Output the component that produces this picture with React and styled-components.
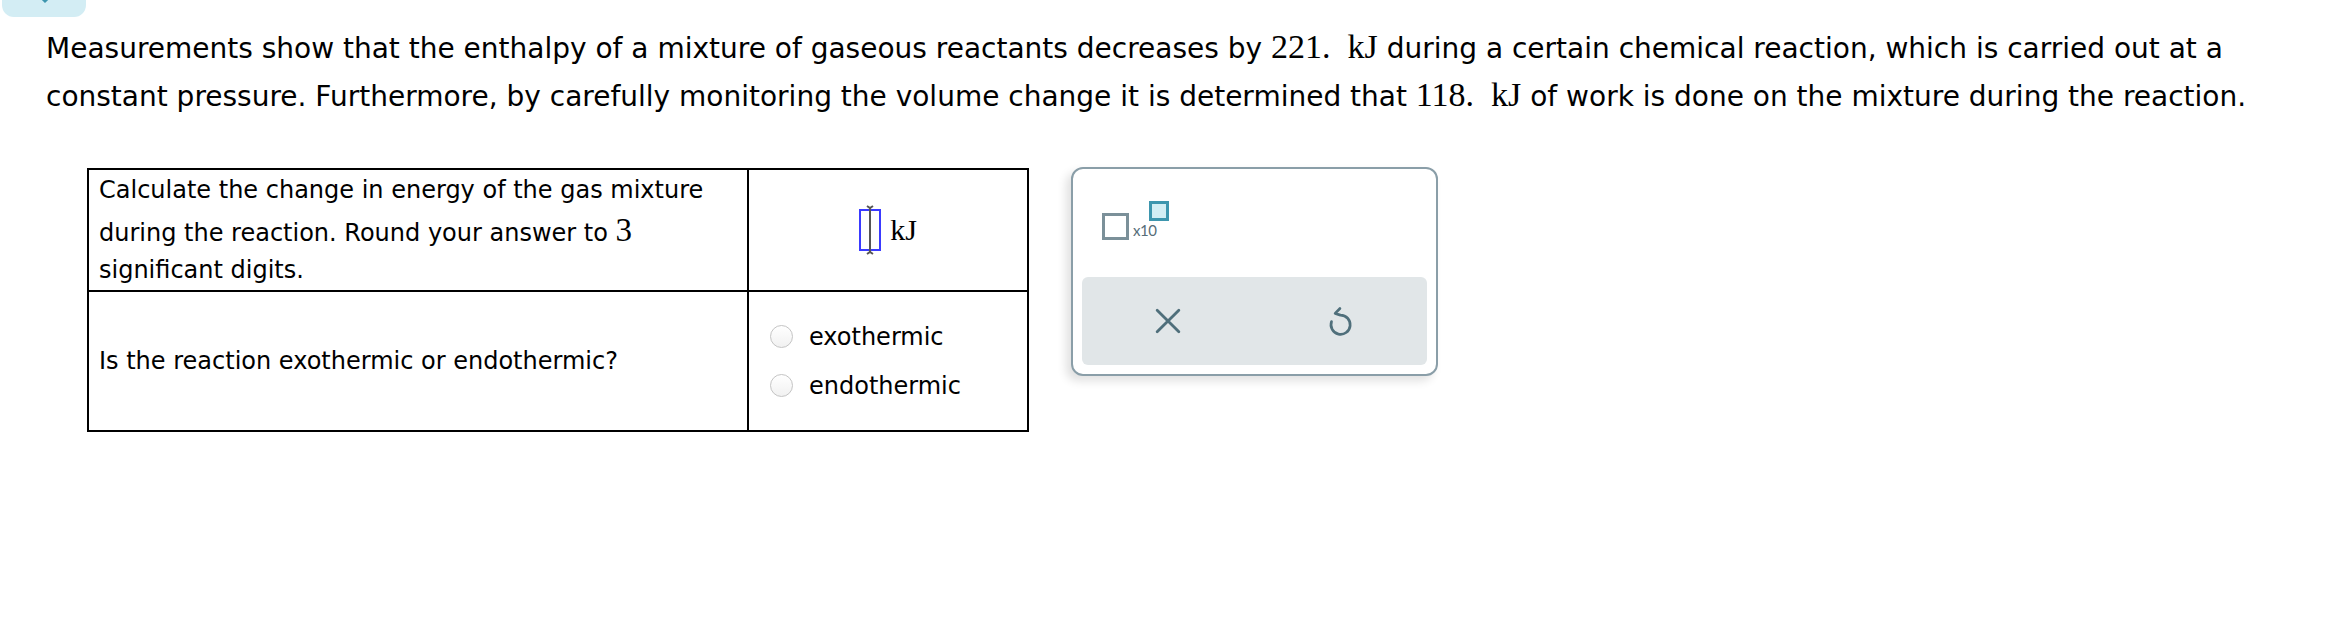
import React from 'react'
import styled, { createGlobalStyle } from 'styled-components'

const GlobalStyle = createGlobalStyle`
  body {
    margin: 0;
    background: #fff;
    font-family: 'DejaVu Sans', Verdana, sans-serif;
    color: #000;
  }
`

const Page = styled.div`
  width: 2344px;
  height: 628px;
  overflow: hidden;
`

const TopTab = styled.div`
  position: relative;
  width: 84px;
  height: 17px;
  margin-left: 2px;
  background: #d3edf4;
  border-radius: 0 0 12px 12px;

  svg {
    position: absolute;
    left: 35px;
    top: -6px;
  }
`

const Content = styled.div`
  padding-left: 46px;
`

const Prompt = styled.p`
  margin: 8px 0 0;
  max-width: 2250px;
  font-size: 28px;
  line-height: 48px;
`

const Serif = styled.span`
  font-family: 'Liberation Serif', 'Times New Roman', serif;
  font-size: ${(p) => p.$size || 34}px;
  line-height: ${(p) => p.$lh || '1'};
`

const UnitGap = styled.span`
  margin-left: 0.5em;
`

const Workspace = styled.div`
  display: flex;
  align-items: flex-start;
  gap: 42px;
  margin: 47px 0 0 41px;
`

const QuestionGrid = styled.div`
  display: grid;
  grid-template-columns: 660px 280px;
  border-top: 2px solid #000;
  border-left: 2px solid #000;
`

const Cell = styled.div`
  box-sizing: border-box;
  height: ${(p) => p.$h}px;
  border-right: 2px solid #000;
  border-bottom: 2px solid #000;
  display: flex;
  align-items: center;
  justify-content: ${(p) => (p.$center ? 'center' : 'flex-start')};
  padding: ${(p) => (p.$center ? '0' : '0 10px')};
  font-size: 24px;
  line-height: 36px;
`

const AnswerSlot = styled.span`
  position: relative;
  display: inline-block;
  box-sizing: border-box;
  width: 22px;
  height: 42px;
  border: 2px solid #3a3aff;

  svg {
    position: absolute;
    left: 4px;
    top: -6px;
  }
`

const Unit = styled.span`
  font-family: 'Liberation Serif', 'Times New Roman', serif;
  font-size: 30px;
  margin-left: 9px;
`

const Choices = styled.div`
  display: flex;
  flex-direction: column;
  gap: 13px;
  padding-left: 11px;
  width: 100%;
`

const Choice = styled.label`
  display: flex;
  align-items: center;
  gap: 16px;
  font-size: 24px;
  line-height: 36px;
`

const Radio = styled.span`
  box-sizing: border-box;
  width: 23px;
  height: 23px;
  border-radius: 50%;
  border: 1px solid #c4c4c4;
  background: linear-gradient(#fff, #f1f1f1);
`

const Keypad = styled.div`
  box-sizing: border-box;
  width: 367px;
  height: 209px;
  margin-top: -1px;
  padding: 9px;
  border: 2px solid #8a9ea8;
  border-radius: 12px;
  background: #fff;
  box-shadow: -5px 5px 10px rgba(0, 0, 0, 0.12);
  display: flex;
  flex-direction: column;
`

const KeyRow = styled.div`
  height: 99px;
  box-sizing: border-box;
  padding: 23px 0 0 20px;
`

const ExpButton = styled.div`
  display: inline-flex;
  align-items: flex-start;
`

const BaseBox = styled.span`
  box-sizing: border-box;
  width: 27px;
  height: 27px;
  margin-top: 12px;
  border: 3px solid #7b9099;
`

const ExpLabel = styled.span`
  align-self: flex-end;
  margin: 0 0 2px 4px;
  font-family: Lato, 'Open Sans', sans-serif;
  font-size: 15px;
  line-height: 1;
  letter-spacing: -0.5px;
  color: #566d78;
`

const SupBox = styled.span`
  box-sizing: border-box;
  width: 20px;
  height: 20px;
  margin-left: -7px;
  border: 3px solid #3d96ae;
  background: #d3eef4;
`

const Actions = styled.div`
  height: 88px;
  display: grid;
  grid-template-columns: 1fr 1fr;
  background: #e1e6e8;
  border-radius: 6px;
`

const ActionButton = styled.div`
  display: flex;
  align-items: center;
  justify-content: center;
  color: #4f6f7b;
`

const Quantity = ({ value, unit }) => (
  <Serif>
    {value}
    <UnitGap>{unit}</UnitGap>
  </Serif>
)

export default function App() {
  return (
    <Page>
      <GlobalStyle />
      <TopTab>
        <svg width='16' height='10' viewBox='0 0 16 10'>
          <path d='M3 2 L8 7 L13 2' fill='none' stroke='#3d96ae' strokeWidth='3' strokeLinecap='round' />
        </svg>
      </TopTab>
      <Content>
        <Prompt>
          Measurements show that the enthalpy of a mixture of gaseous reactants decreases by{' '}
          <Quantity value='221.' unit='kJ' /> during a certain chemical reaction, which is carried
          out at a constant pressure. Furthermore, by carefully monitoring the volume change it is
          determined that <Quantity value='118.' unit='kJ' /> of work is done on the mixture during
          the reaction.
        </Prompt>
        <Workspace>
          <QuestionGrid>
            <Cell $h={122}>
              <div>
                Calculate the change in energy of the gas mixture during the reaction. Round your
                answer to <Serif $size={33} $lh='44px'>3</Serif> significant digits.
              </div>
            </Cell>
            <Cell $h={122} $center>
              <AnswerSlot>
                <svg width='10' height='50' viewBox='0 0 10 50'>
                  <path d='M5 2 V48 M2 1 L5 3 L8 1 M2 49 L5 47 L8 49' fill='none' stroke='#555' strokeWidth='2' />
                </svg>
              </AnswerSlot>
              <Unit>kJ</Unit>
            </Cell>
            <Cell $h={140}>Is the reaction exothermic or endothermic?</Cell>
            <Cell $h={140}>
              <Choices>
                <Choice>
                  <Radio />
                  exothermic
                </Choice>
                <Choice>
                  <Radio />
                  endothermic
                </Choice>
              </Choices>
            </Cell>
          </QuestionGrid>
          <Keypad>
            <KeyRow>
              <ExpButton>
                <BaseBox />
                <ExpLabel>x10</ExpLabel>
                <SupBox />
              </ExpButton>
            </KeyRow>
            <Actions>
              <ActionButton>
                <svg width='26' height='26' viewBox='0 0 24 24'>
                  <path d='M2 2 L22 22 M22 2 L2 22' fill='none' stroke='currentColor' strokeWidth='2.6' strokeLinecap='round' />
                </svg>
              </ActionButton>
              <ActionButton>
                <svg width='32' height='32' viewBox='0 0 24 24'>
                  <path
                    d='M11.2 2.6 L7.6 6.3 L11.6 7.6 A7.2 7.2 0 1 1 4.9 12.4'
                    fill='none'
                    stroke='currentColor'
                    strokeWidth='2'
                    strokeLinecap='round'
                    strokeLinejoin='round'
                  />
                </svg>
              </ActionButton>
            </Actions>
          </Keypad>
        </Workspace>
      </Content>
    </Page>
  )
}
